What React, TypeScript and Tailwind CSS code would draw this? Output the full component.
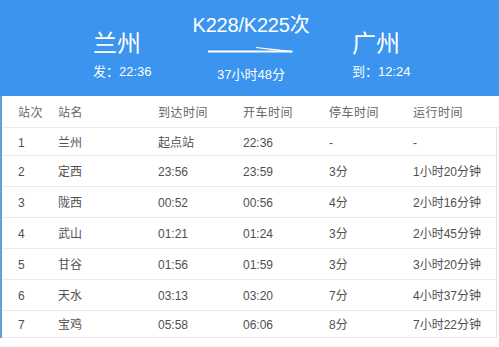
import React from "react";

const rows = [
  ["1", "兰州", "起点站", "22:36", "-", "-"],
  ["2", "定西", "23:56", "23:59", "3分", "1小时20分钟"],
  ["3", "陇西", "00:52", "00:56", "4分", "2小时16分钟"],
  ["4", "武山", "01:21", "01:24", "3分", "2小时45分钟"],
  ["5", "甘谷", "01:56", "01:59", "3分", "3小时20分钟"],
  ["6", "天水", "03:13", "03:20", "7分", "4小时37分钟"],
  ["7", "宝鸡", "05:58", "06:06", "8分", "7小时22分钟"],
];

const heights = ["h-[28px]", "h-[31px]", "h-[31px]", "h-[31px]", "h-[31px]", "h-[31px]", "h-[27px]"];

const font = { fontFamily: '"Liberation Sans", "Noto Sans CJK SC", sans-serif' };

export default function App() {
  return (
    <div className="w-[499px] h-[347px] bg-white overflow-hidden" style={font}>
      <div className="h-[96px] bg-[#3b94ee] flex text-white">
        <div className="pl-[93px] w-[191px] pt-[30px] flex flex-col">
          <div className="text-[24px] leading-[28px]">兰州</div>
          <div className="mt-[7px] text-[13px] leading-[14px]">发：22:36</div>
        </div>
        <div className="w-[120px] flex flex-col items-center pt-[13px]">
          <div className="text-[20px] leading-[24px] tracking-[-0.2px]">K228/K225次</div>
          <svg width="86" height="10" viewBox="0 0 86 10" className="mt-[9px]">
            <line x1="0" y1="5.5" x2="84" y2="5.5" stroke="white" strokeWidth="2" />
            <polygon points="48,1 85,5 84,6.5 48,2" fill="white" />
          </svg>
          <div className="mt-[12px] text-[13px] leading-[14px]">37小时48分</div>
        </div>
        <div className="ml-[41px] pt-[30px] flex flex-col">
          <div className="text-[24px] leading-[28px]">广州</div>
          <div className="mt-[7px] text-[13px] leading-[14px]">到：12:24</div>
        </div>
      </div>
      <div className="border-l-2 border-[#5ea3e0] text-[12px] text-[#505050]">
        <div className="grid grid-cols-[56px_100px_85px_86px_84px_1fr] h-[32px] items-center border-b border-[#ececec] text-[#666] pt-[2px] tracking-[0.5px]">
          <div className="pl-[16px]">站次</div>
          <div>站名</div>
          <div>到达时间</div>
          <div>开车时间</div>
          <div>停车时间</div>
          <div>运行时间</div>
        </div>
        <div className="w-[495px] border-r border-[#e4e4e4]">
          {rows.map((r, i) => (
            <div
              key={i}
              className={`grid grid-cols-[56px_100px_85px_86px_84px_1fr] items-center border-b border-[#ececec] pt-[2px] ${heights[i]}`}
            >
              <div className="pl-[16px]">{r[0]}</div>
              <div>{r[1]}</div>
              <div>{r[2]}</div>
              <div>{r[3]}</div>
              <div>{r[4]}</div>
              <div>{r[5]}</div>
            </div>
          ))}
        </div>
      </div>
    </div>
  );
}
